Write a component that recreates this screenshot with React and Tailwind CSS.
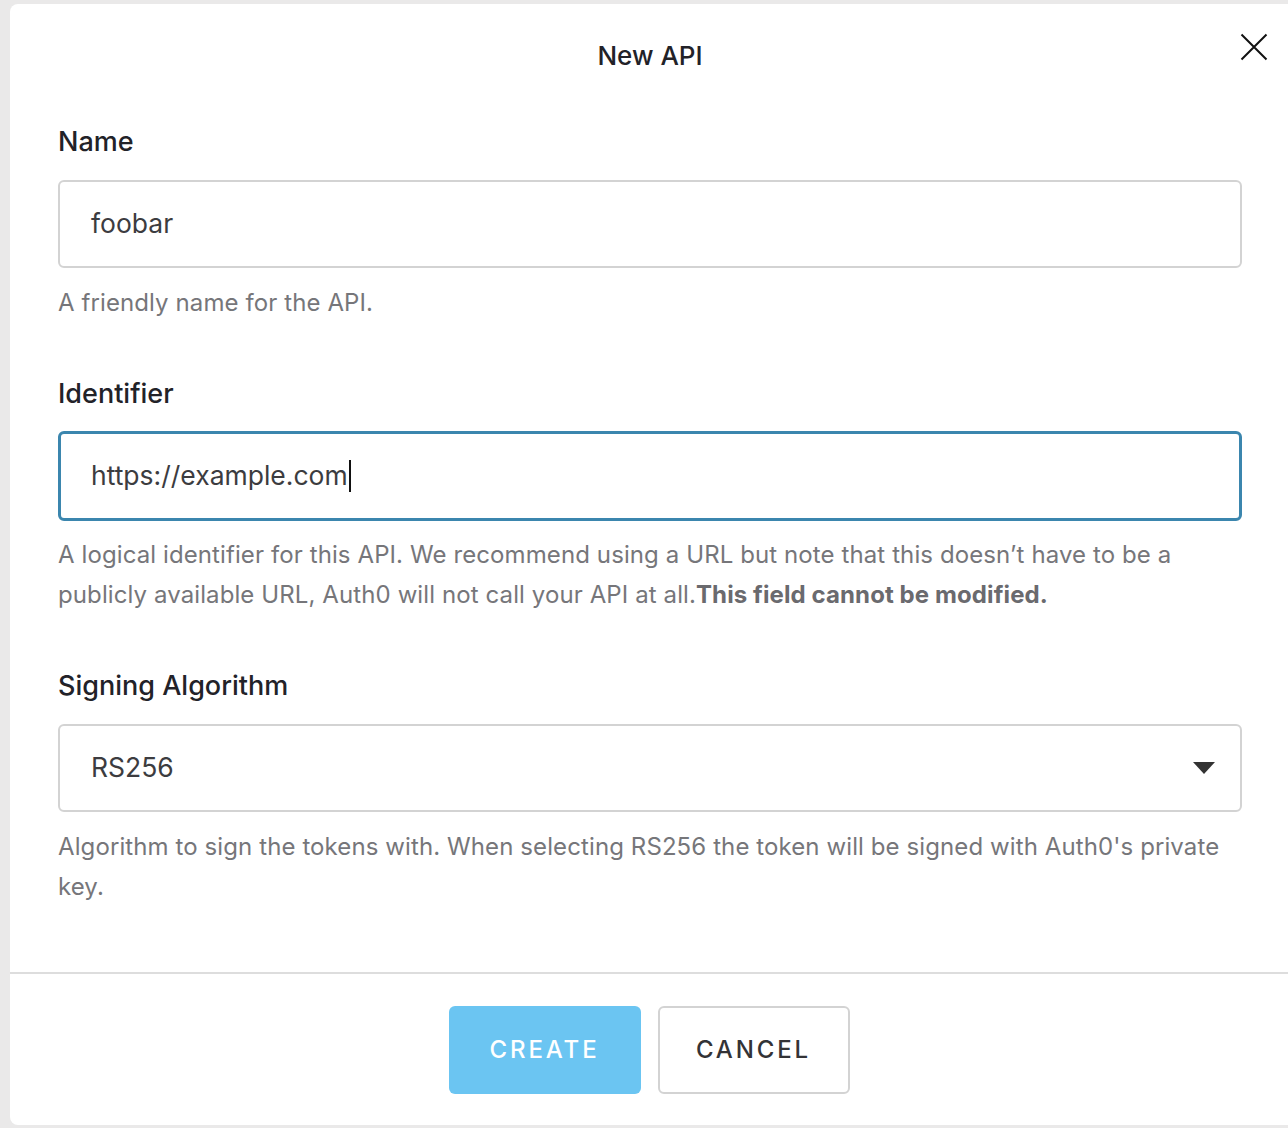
const font = { fontFamily: 'Inter, "Noto Sans", sans-serif' };

const Label = ({ children, className = '' }) => (
  <p className={`text-[27px] leading-[32px] font-medium text-[#222228] ${className}`}>{children}</p>
);

const Help = ({ children, className = '' }) => (
  <p className={`text-[24px] leading-[40px] tracking-[0.1px] text-[#76767a] ${className}`}>{children}</p>
);

const App = () => {
  return (
    <div className="min-h-screen bg-[#eae9e9] pl-[10px] pt-[4px] pb-[3px]" style={font}>
      <div className="bg-white rounded-l-[8px] flex flex-col">
        <div className="relative pl-12 pr-[46px] pt-[36px] pb-[65px]">
          <h1 className="text-center text-[26px] leading-[32px] font-medium text-[#222228]">New API</h1>
          <button className="absolute right-[19px] top-[28px] w-[30px] h-[30px] flex items-center justify-center">
            <svg width="28" height="28" viewBox="0 0 28 28">
              <path d="M1.5 1.5L26.5 26.5M26.5 1.5L1.5 26.5" stroke="#111" strokeWidth="2" fill="none" />
            </svg>
          </button>

          <Label className="mt-[54px]">Name</Label>
          <div className="mt-[22px] h-[88px] rounded-[6px] border-2 border-[#d3d3d3] flex items-center px-[31px] text-[26.5px] text-[#3c3c40]">
            foobar
          </div>
          <Help className="mt-[15px]">A friendly name for the API.</Help>

          <Label className="mt-[55px]">Identifier</Label>
          <div className="mt-[21px] h-[90px] rounded-[6px] border-[3px] border-[#3b86ae] flex items-center px-[30px] text-[26.5px] text-[#3c3c40]">
            https://example.com<span className="inline-block w-[2px] h-[32px] bg-[#111] ml-[1px]" />
          </div>
          <Help className="mt-[14px]">
            A logical identifier for this API. We recommend using a URL but note that this doesn’t have to be a publicly available URL, Auth0 will not call your API at all.<span className="font-bold text-[#6a6a6e]">This field cannot be modified.</span>
          </Help>

          <Label className="mt-[55px]">Signing Algorithm</Label>
          <div className="mt-[22px] h-[88px] rounded-[6px] border-2 border-[#d3d3d3] flex items-center justify-between pl-[31px] pr-[25px] text-[26.5px] text-[#3c3c40]">
            <span>RS256</span>
            <svg width="22" height="12" viewBox="0 0 22 12">
              <path d="M0 0H22L11 12Z" fill="#333" />
            </svg>
          </div>
          <Help className="mt-[15px]">
            Algorithm to sign the tokens with. When selecting RS256 the token will be signed with Auth0's private key.
          </Help>
        </div>

        <div className="border-t-2 border-[#dddddd] pt-[32px] pb-[31px] flex justify-center gap-[17px]">
          <button className="w-[192px] h-[88px] rounded-[6px] bg-[#6bc5f2] text-white text-[24px] tracking-[0.12em] font-medium">
            CREATE
          </button>
          <button className="w-[192px] h-[88px] rounded-[6px] border-2 border-[#d3d3d3] bg-white text-[#333336] text-[24px] tracking-[0.12em] font-medium">
            CANCEL
          </button>
        </div>
      </div>
    </div>
  );
};

export default App;
